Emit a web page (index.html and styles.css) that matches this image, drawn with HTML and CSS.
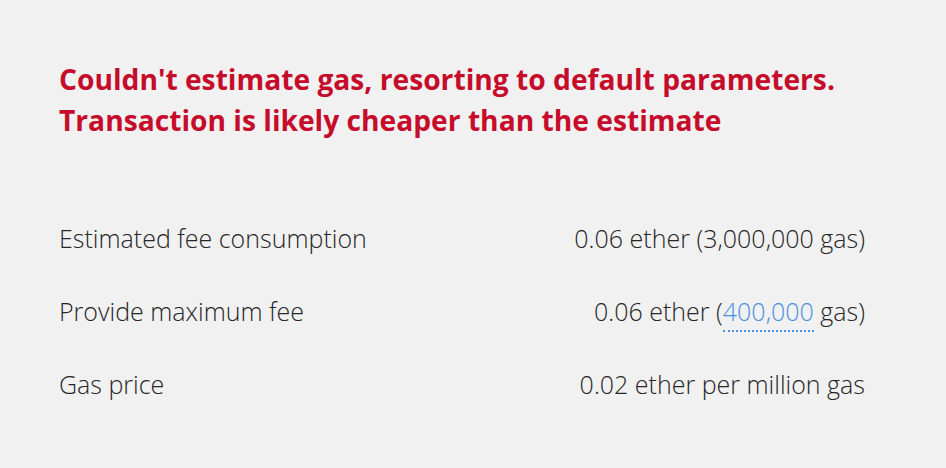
FILE: index.html
```html
<!DOCTYPE html>
<html>
<head>
<meta charset="utf-8">
<link rel="stylesheet" href="styles.css">
</head>
<body>
<div class="panel">
  <h1 class="warning">Couldn't estimate gas, resorting to default parameters.<br>Transaction is likely cheaper than the estimate</h1>
  <div class="rows">
    <div class="row"><span class="label">Estimated fee consumption</span><span class="value">0.06 ether (3,000,000 gas)</span></div>
    <div class="row"><span class="label">Provide maximum fee</span><span class="value">0.06 ether (<span class="link">400,000</span> gas)</span></div>
    <div class="row"><span class="label">Gas price</span><span class="value">0.02 ether per million gas</span></div>
  </div>
</div>
</body>
</html>
```
FILE: styles.css
```css
html, body {
  margin: 0;
  padding: 0;
  background: #f1f1f1;
}
.panel {
  width: 806px;
  padding: 59px 0 0 59px;
  font-family: "Open Sans", "Liberation Sans", sans-serif;
}
.warning {
  margin: 0;
  color: #c60c2b;
  font-size: 28.2px;
  line-height: 41px;
  font-weight: 700;
}
.rows {
  margin-top: 81px;
  display: flex;
  flex-direction: column;
}
.row {
  display: flex;
  justify-content: space-between;
  height: 73px;
  font-size: 25px;
  font-weight: 300;
  color: #262626;
  line-height: 32px;
}
.link {
  color: #4a90e2;
  padding-bottom: 2px;
  border-bottom: 2px dotted #4a90e2;
}
```
